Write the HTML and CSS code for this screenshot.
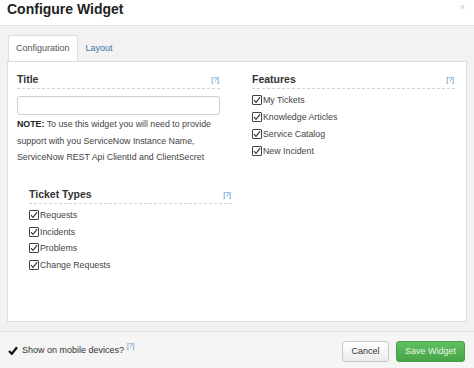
FILE: index.html
```html
<!DOCTYPE html>
<html lang="en">
<head>
  <meta charset="UTF-8">
  <title>Configure Widget</title>
  <link rel="stylesheet" href="styles.css">
</head>
<body>
  <div class="modal">
    <!-- Шапка -->
    <div class="modal-header">
      <h1>Configure Widget</h1>
      <span class="close">&times;</span>
    </div>

    <!-- Тело с вкладками -->
    <div class="modal-body">
      <div class="tabs">
        <div class="tab active">Configuration</div>
        <div class="tab">Layout</div>
      </div>

      <div class="tab-content">
        <div class="row">
          <div class="section">
            <div class="section-title">Title <a class="help">[?]</a></div>
            <input class="text-input" type="text">
            <p class="note"><b>NOTE:</b> To use this widget you will need to provide support with you ServiceNow Instance Name, ServiceNow REST Api ClientId and ClientSecret</p>
          </div>

          <div class="section">
            <div class="section-title">Features <a class="help">[?]</a></div>
            <label class="check"><span class="box"></span>My Tickets</label>
            <label class="check"><span class="box"></span>Knowledge Articles</label>
            <label class="check"><span class="box"></span>Service Catalog</label>
            <label class="check"><span class="box"></span>New Incident</label>
          </div>
        </div>

        <div class="section ticket-types">
          <div class="section-title">Ticket Types <a class="help">[?]</a></div>
          <label class="check"><span class="box"></span>Requests</label>
          <label class="check"><span class="box"></span>Incidents</label>
          <label class="check"><span class="box"></span>Problems</label>
          <label class="check"><span class="box"></span>Change Requests</label>
        </div>
      </div>
    </div>

    <!-- Подвал -->
    <div class="modal-footer">
      <label class="mobile">
        <span class="tick">
          <svg width="10" height="9" viewBox="0 0 10 9"><path d="M1 5 L3.8 7.8 L9 1.2" fill="none" stroke="#111" stroke-width="2.2"/></svg>
        </span>
        Show on mobile devices? <a class="help sup">[?]</a>
      </label>
      <div class="buttons">
        <button class="btn">Cancel</button>
        <button class="btn btn-success">Save Widget</button>
      </div>
    </div>
  </div>
</body>
</html>
```

FILE: styles.css
```css
/* Общие стили */
body {
  margin: 0;
  font-family: 'Liberation Sans', Arial, sans-serif;
  color: #333;
  background-color: #fff;
}

.modal {
  width: 474px;
  height: 368px;
  display: flex;
  flex-direction: column;
}

/* Шапка */
.modal-header {
  height: 25px;
  border-bottom: 1px solid #e2e2e2;
  display: flex;
  justify-content: space-between;
  align-items: flex-start;
  padding: 0 9px 0 7px;
}

.modal-header h1 {
  margin: 0;
  font-size: 14px;
  line-height: 19px;
  font-weight: bold;
  color: #222;
}

.close {
  color: #c8c8c8;
  font-size: 9px;
  line-height: 9px;
  margin-top: 3px;
}

/* Тело */
.modal-body {
  background-color: #f2f2f2;
  padding: 9px 7px 9px 7px;
  height: 305px;
  box-sizing: border-box;
}

.tabs {
  display: flex;
  height: 26px;
  padding-left: 1px;
}

.tab {
  font-size: 9px;
  line-height: 26px;
  padding: 0 9px 0 8px;
  color: #3f74a8;
}

.tab.active {
  background-color: #fff;
  color: #555;
  border: 1px solid #ddd;
  border-bottom: none;
  border-radius: 3px 3px 0 0;
  padding: 0 7px 0 7px;
  line-height: 25px;
  height: 26px;
  box-sizing: border-box;
  margin-bottom: -1px;
  position: relative;
  z-index: 1;
}

.tab-content {
  background-color: #fff;
  border: 1px solid #ddd;
  height: 261px;
  box-sizing: border-box;
  padding: 9px 10px 0 9px;
}

.row {
  display: flex;
  gap: 32px;
}

.section {
  width: 203px;
}

.section-title {
  font-size: 10.5px;
  font-weight: bold;
  line-height: 17px;
  border-bottom: 1px dashed #d4d4d4;
  display: flex;
  justify-content: space-between;
  align-items: center;
  margin-bottom: 3px;
}

.help {
  color: #4a86c5;
  font-size: 7px;
  font-weight: normal;
  padding-right: 1px;
}

.text-input {
  display: block;
  width: 203px;
  height: 19px;
  box-sizing: border-box;
  border: 1px solid #cfcfcf;
  border-radius: 3px;
  margin: 7px 0 1px 0;
}

.note {
  margin: 0;
  font-size: 8.8px;
  line-height: 16.5px;
  color: #444;
}

.note b {
  color: #222;
}

/* Чекбоксы */
.check {
  display: flex;
  align-items: center;
  height: 16.8px;
  font-size: 8.8px;
  color: #444;
}

.box {
  width: 8px;
  height: 8px;
  border: 1px solid #444;
  border-radius: 1px;
  margin-right: 1px;
  background: #fff url("data:image/svg+xml,%3Csvg xmlns='http://www.w3.org/2000/svg' width='8' height='8' viewBox='0 0 8 8'%3E%3Cpath d='M1 4.2 L3 6.3 L7.2 1.2' fill='none' stroke='%23333' stroke-width='1.1'/%3E%3C/svg%3E") no-repeat center;
}

.ticket-types {
  margin: 20px 0 0 12px;
}

/* Подвал */
.modal-footer {
  flex: 1;
  border-top: 1px solid #e0e0e0;
  background-color: #f5f5f5;
  display: flex;
  justify-content: space-between;
  align-items: center;
  padding: 0 9px 0 8px;
}

.mobile {
  display: flex;
  align-items: center;
  font-size: 9px;
  color: #333;
}

.tick {
  width: 10px;
  height: 10px;
  margin-right: 4px;
  display: flex;
  align-items: center;
}

.help.sup {
  font-size: 6.5px;
  align-self: flex-start;
  margin-left: 3px;
  margin-top: -3px;
}

.buttons {
  display: flex;
  gap: 7px;
  margin-top: 2px;
}

.btn {
  font-family: 'Liberation Sans', Arial, sans-serif;
  font-size: 9px;
  height: 21px;
  padding: 0;
  white-space: nowrap;
  border: 1px solid #c8c8c8;
  border-radius: 3px;
  background: linear-gradient(#ffffff, #ececec);
  color: #333;
  width: 47px;
}

.btn-success {
  width: 69px;
  border-color: #4a9a4a;
  background: linear-gradient(#5fc05f, #48a448);
  color: #e8f6e8;
}
```
